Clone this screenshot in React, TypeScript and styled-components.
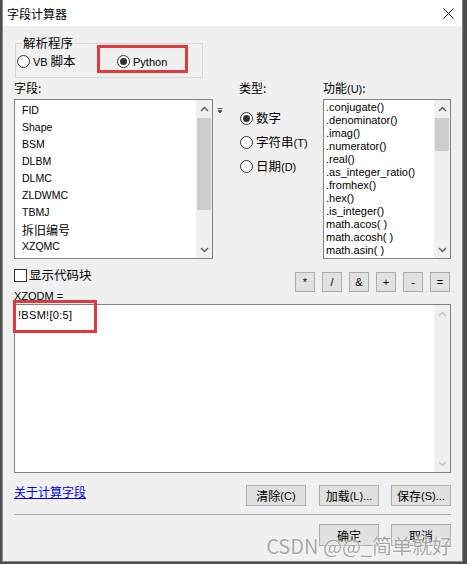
import styled, { createGlobalStyle } from "styled-components";

const GlobalStyle = createGlobalStyle`
  html, body {
    margin: 0;
    padding: 0;
    background: #4d4d4d;
  }
  body {
    font-family: "Liberation Sans", "Noto Sans CJK SC", sans-serif;
    color: #000;
  }
  * {
    box-sizing: border-box;
  }
`;

const CJK = `"Noto Sans CJK SC", "Liberation Sans", sans-serif`;

const fields = ["FID", "Shape", "BSM", "DLBM", "DLMC", "ZLDWMC", "TBMJ", "拆旧编号", "XZQMC", "更新时间"];

const funcs = [
  ".conjugate()",
  ".denominator()",
  ".imag()",
  ".numerator()",
  ".real()",
  ".as_integer_ratio()",
  ".fromhex()",
  ".hex()",
  ".is_integer()",
  "math.acos( )",
  "math.acosh( )",
  "math.asin( )",
  "math.asinh( )",
];

const ops = ["*", "/", "&", "+", "-", "="];

const Chevron = ({ down }: { down?: boolean }) => (
  <svg width="9" height="6" viewBox="0 0 9 6">
    <path
      d={down ? "M1 1 L4.5 4.5 L8 1" : "M1 5 L4.5 1.5 L8 5"}
      stroke="currentColor"
      strokeWidth="1.5"
      fill="none"
    />
  </svg>
);

interface ScrollProps {
  thumbTop?: number;
  thumbHeight?: number;
  disabled?: boolean;
}

const Scrollbar = ({ thumbTop, thumbHeight, disabled }: ScrollProps) => (
  <ScrollTrack $disabled={disabled}>
    <ScrollBtn>
      <Chevron />
    </ScrollBtn>
    <ThumbArea>
      {thumbHeight ? <Thumb $top={thumbTop || 0} $height={thumbHeight} /> : null}
    </ThumbArea>
    <ScrollBtn>
      <Chevron down />
    </ScrollBtn>
  </ScrollTrack>
);

const Radio = ({ checked, children }: { checked?: boolean; children: React.ReactNode }) => (
  <RadioItem>
    <RadioCircle $checked={checked} />
    <span>{children}</span>
  </RadioItem>
);

const App = () => {
  return (
    <Page>
      <GlobalStyle />
      <Window>
        <TitleBar>
          <Title>字段计算器</Title>
          <svg width="11" height="11" viewBox="0 0 11 11">
            <path d="M0.5 0.5 L10.5 10.5 M10.5 0.5 L0.5 10.5" stroke="#111" strokeWidth="1" />
          </svg>
        </TitleBar>

        <Body>
          <GroupBox>
            <Legend>解析程序</Legend>
            <ParserOption $width={100}>
              <Radio>
                <Small>VB</Small> 脚本
              </Radio>
            </ParserOption>
            <ParserOption>
              <Radio checked>
                <Latin>Python</Latin>
              </Radio>
            </ParserOption>
          </GroupBox>

          <Columns>
            <Column $width={199}>
              <Label>字段:</Label>
              <ListBox>
                <ListContent $pad={7} $top={2}>
                  {fields.map((f) => (
                    <FieldRow key={f} $cjk={/[^\x00-\x7f]/.test(f)}>
                      {f}
                    </FieldRow>
                  ))}
                </ListContent>
                <Scrollbar thumbTop={1} thumbHeight={92} />
              </ListBox>
            </Column>

            <SortMark>
              <svg width="6" height="6" viewBox="0 0 6 6">
                <path d="M0.5 0.5 H5.5 M1 2.5 L3 5 L5 2.5 Z" stroke="#555" strokeWidth="1" fill="#555" />
              </svg>
            </SortMark>

            <Column $width={84}>
              <Label>类型:</Label>
              <TypeList>
                <TypeRow>
                  <Radio checked>数字</Radio>
                </TypeRow>
                <TypeRow>
                  <Radio>
                    字符串<Small>(T)</Small>
                  </Radio>
                </TypeRow>
                <TypeRow>
                  <Radio>
                    日期<Small>(D)</Small>
                  </Radio>
                </TypeRow>
              </TypeList>
            </Column>

            <Column $width={128}>
              <Label>
                功能<Small>(U)</Small>:
              </Label>
              <ListBox>
                <ListContent $pad={2} $top={1}>
                  {funcs.map((f) => (
                    <FuncRow key={f}>{f}</FuncRow>
                  ))}
                </ListContent>
                <Scrollbar thumbTop={1} thumbHeight={33} />
              </ListBox>
            </Column>
          </Columns>

          <OptionsRow>
            <OptionsLeft>
              <CheckItem>
                <CheckBox />
                <span>显示代码块</span>
              </CheckItem>
              <ExprLabel>XZQDM =</ExprLabel>
            </OptionsLeft>
            <Ops>
              {ops.map((o) => (
                <OpButton key={o}>{o}</OpButton>
              ))}
            </Ops>
          </OptionsRow>

          <ExprBox>
            <ExprText>!BSM![0:5]</ExprText>
            <Scrollbar disabled />
          </ExprBox>

          <ActionRow>
            <HelpLink>关于计算字段</HelpLink>
            <ActionButtons>
              <Button $ml={0}>
                清除<Small>(C)</Small>
              </Button>
              <Button $ml={13}>
                加载<Small>(L)...</Small>
              </Button>
              <Button $ml={12}>
                保存<Small>(S)...</Small>
              </Button>
            </ActionButtons>
          </ActionRow>

          <Separator />

          <DialogButtons>
            <Button $ml={0} $h={22}>确定</Button>
            <Button $ml={12} $h={22}>取消</Button>
          </DialogButtons>
        </Body>

        <Highlight $x={94} $y={45} $w={91} $h={28} />
        <Highlight $x={10} $y={300} $w={84} $h={33} />
        <Watermark>CSDN @@_简单就好</Watermark>
      </Window>
    </Page>
  );
};

const Page = styled.div`
  width: 467px;
  height: 564px;
  padding-left: 2px;
  display: flex;
  overflow: hidden;
  background: #4d4d4d;
`;

const Window = styled.div`
  position: relative;
  width: 461px;
  height: 562px;
  background: #f0f0f0;
  border: 1px solid #8a8a8a;
  border-top: none;
  display: flex;
  flex-direction: column;
`;

const TitleBar = styled.div`
  height: 26px;
  background: #fff;
  display: flex;
  align-items: center;
  justify-content: space-between;
  padding: 0 8px 0 4px;
  flex-shrink: 0;
`;

const Title = styled.span`
  font-family: ${CJK};
  font-size: 12px;
`;

const Body = styled.div`
  padding: 0 11px;
  display: flex;
  flex-direction: column;
`;

const GroupBox = styled.div`
  position: relative;
  margin: 17px 0 0 1px;
  width: 188px;
  height: 35px;
  border: 1px solid #d5d5d5;
  display: flex;
  align-items: center;
  padding-left: 1px;
  padding-top: 1px;
`;

const Legend = styled.span`
  position: absolute;
  left: 6px;
  top: -9px;
  padding: 0 1px;
  background: #f0f0f0;
  font-family: ${CJK};
  font-size: 12.5px;
  line-height: 16px;
`;

const ParserOption = styled.div<{ $width?: number }>`
  width: ${(p) => (p.$width ? `${p.$width}px` : "auto")};
`;

const RadioItem = styled.label`
  display: flex;
  align-items: center;
  gap: 3px;
  font-family: ${CJK};
  font-size: 12.5px;
  line-height: 14px;
`;

const RadioCircle = styled.span<{ $checked?: boolean }>`
  width: 13px;
  height: 13px;
  border-radius: 50%;
  border: 1px solid #333;
  background: #fff;
  display: flex;
  align-items: center;
  justify-content: center;
  flex-shrink: 0;

  &::after {
    content: "";
    width: 7px;
    height: 7px;
    border-radius: 50%;
    background: ${(p) => (p.$checked ? "#333" : "transparent")};
  }
`;

const Small = styled.span`
  font-family: "Liberation Sans", sans-serif;
  font-size: 11px;
`;

const Latin = styled.span`
  font-family: "Liberation Sans", sans-serif;
  font-size: 11px;
`;

const Columns = styled.div`
  display: flex;
  margin-top: 3px;
`;

const Column = styled.div<{ $width: number }>`
  width: ${(p) => p.$width}px;
  display: flex;
  flex-direction: column;
  flex-shrink: 0;
`;

const Label = styled.div`
  font-family: ${CJK};
  font-size: 12px;
  line-height: 14px;
  height: 15px;
  margin-bottom: 3px;
`;

const SortMark = styled.div`
  width: 26px;
  padding: 19px 0 0 4px;
`;

const ListBox = styled.div`
  height: 160px;
  border: 1px solid #828282;
  background: #fff;
  display: flex;
`;

const ListContent = styled.div<{ $pad: number; $top: number }>`
  flex: 1;
  overflow: hidden;
  padding: ${(p) => p.$top}px 0 0 ${(p) => p.$pad}px;
`;

const FieldRow = styled.div<{ $cjk?: boolean }>`
  height: 17px;
  line-height: 17px;
  font-family: ${(p) => (p.$cjk ? CJK : `"Liberation Sans", sans-serif`)};
  font-size: ${(p) => (p.$cjk ? "12px" : "10.5px")};
  white-space: nowrap;
`;

const FuncRow = styled.div`
  height: 13px;
  line-height: 13px;
  font-size: 11px;
  white-space: nowrap;
`;

const ScrollTrack = styled.div<{ $disabled?: boolean }>`
  width: 16px;
  background: #f0f0f0;
  display: flex;
  flex-direction: column;
  color: ${(p) => (p.$disabled ? "#c4c4c4" : "#606060")};
  flex-shrink: 0;
`;

const ScrollBtn = styled.div`
  height: 17px;
  display: flex;
  align-items: center;
  justify-content: center;
  flex-shrink: 0;
`;

const ThumbArea = styled.div`
  flex: 1;
  padding: 0 1px;
`;

const Thumb = styled.div<{ $top: number; $height: number }>`
  margin-top: ${(p) => p.$top}px;
  height: ${(p) => p.$height}px;
  background: #cdcdcd;
`;

const TypeList = styled.div`
  padding: 7px 0 0 1px;
`;

const TypeRow = styled.div`
  height: 24px;
  display: flex;
  align-items: center;
`;

const OptionsRow = styled.div`
  display: flex;
  justify-content: space-between;
  margin-top: 9px;
`;

const OptionsLeft = styled.div`
  display: flex;
  flex-direction: column;
`;

const CheckItem = styled.label`
  display: flex;
  align-items: center;
  gap: 2px;
  height: 14px;
  font-family: ${CJK};
  font-size: 12.5px;
  line-height: 14px;
`;

const CheckBox = styled.span`
  width: 13px;
  height: 13px;
  border: 1px solid #333;
  background: #fff;
`;

const ExprLabel = styled.div`
  margin-top: 8px;
  font-size: 11px;
  line-height: 12px;
  height: 12px;
`;

const Ops = styled.div`
  display: flex;
  gap: 7px;
  margin: 4px 1px 0 0;
`;

const OpButton = styled.button`
  width: 20px;
  height: 20px;
  padding: 0;
  background: #e1e1e1;
  border: 1px solid #adadad;
  font-family: "Liberation Sans", sans-serif;
  font-size: 11px;
  line-height: 18px;
  color: #000;
`;

const ExprBox = styled.div`
  margin-top: 2px;
  height: 169px;
  border: 1px solid #828282;
  background: #fff;
  display: flex;
`;

const ExprText = styled.div`
  flex: 1;
  padding: 3px 0 0 3px;
  font-size: 11px;
  line-height: 14px;
  letter-spacing: 0.3px;
`;

const ActionRow = styled.div`
  display: flex;
  justify-content: space-between;
  align-items: flex-start;
  margin-top: 12px;
`;

const HelpLink = styled.a`
  font-family: ${CJK};
  font-size: 12px;
  line-height: 13px;
  color: #0000ee;
  text-decoration: underline;
`;

const ActionButtons = styled.div`
  display: flex;
`;

const Button = styled.button<{ $ml: number; $h?: number }>`
  width: 60px;
  height: ${(p) => p.$h || 21}px;
  margin-left: ${(p) => p.$ml}px;
  padding: 0;
  background: #e1e1e1;
  border: 1px solid #adadad;
  font-family: ${CJK};
  font-size: 12px;
  color: #000;
  display: flex;
  align-items: center;
  justify-content: center;
`;

const Separator = styled.div`
  margin-top: 8px;
  height: 1px;
  background: #a8a8a8;
`;

const DialogButtons = styled.div`
  display: flex;
  justify-content: flex-end;
  margin-top: 9px;
`;

const Highlight = styled.div<{ $x: number; $y: number; $w: number; $h: number }>`
  position: absolute;
  left: ${(p) => p.$x}px;
  top: ${(p) => p.$y}px;
  width: ${(p) => p.$w}px;
  height: ${(p) => p.$h}px;
  border: 3px solid #e03a3e;
  pointer-events: none;
`;

const Watermark = styled.div`
  position: absolute;
  right: 10px;
  bottom: 2px;
  font-family: ${CJK};
  font-size: 20px;
  line-height: 26px;
  color: rgba(150, 150, 150, 0.85);
  text-shadow: 0 0 2px #fff, 0 0 1px #fff;
  white-space: nowrap;
  pointer-events: none;
`;

export default App;
